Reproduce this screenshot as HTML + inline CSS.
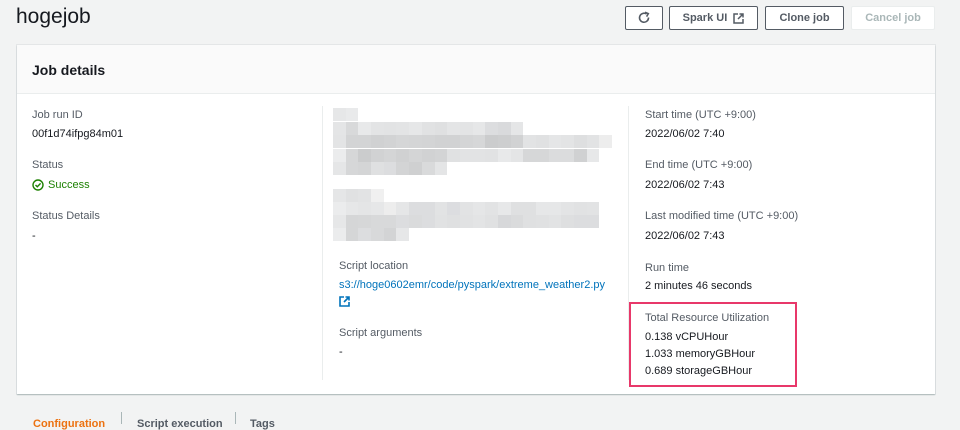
<!DOCTYPE html>
<html><head><meta charset="utf-8"><style>
*{margin:0;padding:0;box-sizing:border-box}
body{width:960px;height:421px;overflow:hidden;background:#f2f3f3;font-family:"Liberation Sans",Arial,sans-serif;color:#16191f;position:relative;font-size:11px}
.a{position:absolute;white-space:nowrap}
.btn{position:absolute;top:6px;height:24px;border:1px solid #545b64;background:#fff;font-weight:bold;font-size:11px;color:#545b64;display:flex;align-items:center;justify-content:center;border-radius:2px}
.lbl{color:#545b64}
.row{position:absolute;display:flex;height:13px}
.row span{width:12.7px;height:13px}
</style></head><body>
<div class="a" style="left:16px;top:5px;font-size:21px;color:#16191f">hogejob</div>
<div class="btn" style="left:625px;width:38px"><svg width="14" height="14" viewBox="0 0 14 14"><path d="M11.5 6.5A4.5 4.5 0 1 1 9.5 3" fill="none" stroke="#545b64" stroke-width="1.6"/><path d="M8 1.2L11.3 2.6 9.6 5.6" fill="none" stroke="#545b64" stroke-width="1.6"/></svg></div>
<div class="btn" style="left:669px;width:89px">Spark UI&nbsp;&nbsp;<svg width="11" height="11" viewBox="0 0 11 11"><path d="M5 1H1v9h9V6M6.5 1H10v3.5M10 1L5 6" fill="none" stroke="#545b64" stroke-width="1.5"/></svg></div>
<div class="btn" style="left:765px;width:79px">Clone job</div>
<div class="btn" style="left:851px;width:84px;border-color:#eaeded;color:#aab7b8">Cancel job</div>

<div class="a" style="left:17px;top:45px;width:918px;height:349px;background:#fff;box-shadow:0 1px 1px #aab7b8,0 0 0 1px #e4e6e7"></div>
<div class="a" style="left:17px;top:45px;width:918px;height:49px;background:#fafafa;border-bottom:1px solid #eaeded"></div>
<div class="a" style="left:32px;top:62px;font-size:14px;font-weight:bold">Job details</div>

<div class="a" style="left:322px;top:106px;width:1px;height:274px;background:#eaeded"></div>
<div class="a" style="left:628px;top:106px;width:1px;height:274px;background:#eaeded"></div>

<div class="a lbl" style="left:32px;top:109px">Job run ID</div>
<div class="a" style="left:32px;top:128px">00f1d74ifpg84m01</div>
<div class="a lbl" style="left:32px;top:159px">Status</div>
<div class="a" style="left:32px;top:179px;color:#1d8102;display:flex;align-items:center"><svg width="12" height="12" viewBox="0 0 12 12" style="margin-right:4px"><circle cx="6" cy="6" r="5" fill="none" stroke="#1d8102" stroke-width="1.4"/><path d="M3.5 6l1.8 1.8L8.6 4.4" fill="none" stroke="#1d8102" stroke-width="1.4"/></svg>Success</div>
<div class="a lbl" style="left:32px;top:210px">Status Details</div>
<div class="a" style="left:32px;top:230px">-</div>

<div class="row" style="left:333px;top:108px"><span style="background:#e6e7e8"></span><span style="background:#e9eaeb"></span></div>
<div class="row" style="left:333px;top:122px"><span style="background:#e4e5e6"></span><span style="background:#d8d9da"></span><span style="background:#e8e9ea"></span><span style="background:#e3e4e5"></span><span style="background:#e2e3e4"></span><span style="background:#e3e4e5"></span><span style="background:#e6e7e8"></span><span style="background:#e1e2e3"></span><span style="background:#dfe0e1"></span><span style="background:#e4e5e6"></span><span style="background:#e3e4e5"></span><span style="background:#e6e7e8"></span><span style="background:#dcdddf"></span><span style="background:#d9dadc"></span><span style="background:#e5e6e7"></span></div>
<div class="row" style="left:333px;top:135px"><span style="background:#e3e4e5"></span><span style="background:#d3d4d5"></span><span style="background:#d3d4d5"></span><span style="background:#d0d1d2"></span><span style="background:#d2d3d4"></span><span style="background:#d5d6d7"></span><span style="background:#d4d5d6"></span><span style="background:#d3d4d5"></span><span style="background:#d1d2d3"></span><span style="background:#d1d2d3"></span><span style="background:#d4d5d6"></span><span style="background:#d6d7d8"></span><span style="background:#cbcccd"></span><span style="background:#cdcecf"></span><span style="background:#d1d2d3"></span><span style="background:#e2e3e4"></span><span style="background:#e0e1e2"></span><span style="background:#e5e6e7"></span><span style="background:#e3e4e5"></span><span style="background:#dedfe0"></span><span style="background:#e2e3e4"></span><span style="background:#ededed"></span></div>
<div class="row" style="left:333px;top:149px"><span style="background:#ebeced"></span><span style="background:#d6d7d8"></span><span style="background:#cbcccd"></span><span style="background:#d1d2d3"></span><span style="background:#d4d5d6"></span><span style="background:#d0d1d2"></span><span style="background:#d4d5d6"></span><span style="background:#d1d2d3"></span><span style="background:#d3d4d5"></span><span style="background:#e0e1e2"></span><span style="background:#e2e3e4"></span><span style="background:#e2e3e4"></span><span style="background:#e1e2e3"></span><span style="background:#e8e9ea"></span><span style="background:#e4e5e6"></span><span style="background:#d6d7d8"></span><span style="background:#d6d7d8"></span><span style="background:#dbdcdd"></span><span style="background:#dbdcdd"></span><span style="background:#d0d1d2"></span><span style="background:#e7e8e9"></span></div>
<div class="row" style="left:333px;top:162px"><span style="background:#e5e6e7"></span><span style="background:#d6d7d8"></span><span style="background:#d4d5d6"></span><span style="background:#dfe0e1"></span><span style="background:#dcdddf"></span><span style="background:#d3d4d5"></span><span style="background:#cfd0d1"></span><span style="background:#d9dadb"></span><span style="background:#e4e5e6"></span></div>
<div class="row" style="left:333px;top:189px"><span style="background:#e5e6e7"></span><span style="background:#e0e1e2"></span><span style="background:#e2e3e4"></span><span style="background:#f0f0f0"></span></div>
<div class="row" style="left:333px;top:202px"><span style="background:#ebeced"></span><span style="background:#e6e7e8"></span><span style="background:#e4e5e6"></span><span style="background:#e6e7e8"></span><span style="background:#ededed"></span><span style="background:#e5e6e7"></span><span style="background:#dcdddf"></span><span style="background:#dcdddf"></span><span style="background:#e2e3e4"></span><span style="background:#dcdde0"></span><span style="background:#e2e3e4"></span><span style="background:#e5e6e7"></span><span style="background:#e2e3e4"></span><span style="background:#e7e8e9"></span><span style="background:#dfe0e1"></span><span style="background:#dfe0e1"></span><span style="background:#e6e7e8"></span><span style="background:#e6e7e8"></span><span style="background:#e3e4e5"></span><span style="background:#e1e2e3"></span><span style="background:#e2e3e4"></span></div>
<div class="row" style="left:333px;top:215px"><span style="background:#e6e7e8"></span><span style="background:#d5d6d7"></span><span style="background:#d6d7d8"></span><span style="background:#d8d9da"></span><span style="background:#d8d9da"></span><span style="background:#dcdddf"></span><span style="background:#dadbdc"></span><span style="background:#dcdddf"></span><span style="background:#e1e2e3"></span><span style="background:#dfe0e1"></span><span style="background:#e1e2e3"></span><span style="background:#e3e4e5"></span><span style="background:#e0e1e2"></span><span style="background:#d7d8da"></span><span style="background:#dadbdc"></span><span style="background:#dfe0e1"></span><span style="background:#e0e1e2"></span><span style="background:#e2e3e4"></span><span style="background:#dedfe0"></span><span style="background:#dcdddf"></span><span style="background:#dcdddf"></span></div>
<div class="row" style="left:333px;top:228px"><span style="background:#ebeced"></span><span style="background:#d5d6d7"></span><span style="background:#dcdddf"></span><span style="background:#d8d9da"></span><span style="background:#d3d4d5"></span><span style="background:#e6e7e8"></span></div>

<div class="a lbl" style="left:339px;top:260px">Script location</div>
<div class="a" style="left:339px;top:279px;color:#0073bb">s3://hoge0602emr/code/pyspark/extreme_weather2.py</div>
<svg class="a" style="left:339px;top:296px" width="11" height="11" viewBox="0 0 11 11"><path d="M5 1H1v9h9V6M6.5 1H10v3.5M10 1L5 6" fill="none" stroke="#0073bb" stroke-width="1.6"/></svg>
<div class="a lbl" style="left:339px;top:327px">Script arguments</div>
<div class="a" style="left:339px;top:346px">-</div>

<div class="a lbl" style="left:645px;top:109px">Start time (UTC +9:00)</div>
<div class="a" style="left:645px;top:128px">2022/06/02 7:40</div>
<div class="a lbl" style="left:645px;top:159px">End time (UTC +9:00)</div>
<div class="a" style="left:645px;top:179px">2022/06/02 7:43</div>
<div class="a lbl" style="left:645px;top:210px">Last modified time (UTC +9:00)</div>
<div class="a" style="left:645px;top:230px">2022/06/02 7:43</div>
<div class="a lbl" style="left:645px;top:262px">Run time</div>
<div class="a" style="left:645px;top:280px">2 minutes 46 seconds</div>
<div class="a" style="left:629px;top:302px;width:168px;height:85px;border:2px solid #e8386a"></div>
<div class="a lbl" style="left:645px;top:312px">Total Resource Utilization</div>
<div class="a" style="left:645px;top:331px">0.138 vCPUHour</div>
<div class="a" style="left:645px;top:348px">1.033 memoryGBHour</div>
<div class="a" style="left:645px;top:365px">0.689 storageGBHour</div>

<div class="a" style="left:121px;top:412px;width:1px;height:12px;background:#aab7b8"></div>
<div class="a" style="left:235px;top:412px;width:1px;height:12px;background:#aab7b8"></div>
<div class="a" style="left:33px;top:418px;color:#ec7211;font-weight:bold">Configuration</div>
<div class="a" style="left:137px;top:418px;color:#545b64;font-weight:bold">Script execution</div>
<div class="a" style="left:250px;top:418px;color:#545b64;font-weight:bold">Tags</div>
</body></html>
